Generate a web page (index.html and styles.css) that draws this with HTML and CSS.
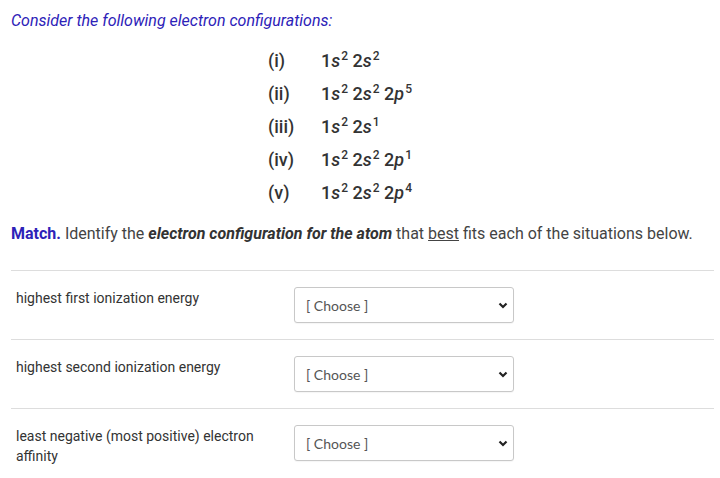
FILE: index.html
```html
<!DOCTYPE html>
<html>
<head>
<meta charset="utf-8">
<link rel="stylesheet" href="styles.css">
</head>
<body>
<div class="page">
  <p class="intro">Consider the following electron configurations:</p>
  <div class="configs">
    <div class="cfg"><span class="num">(i)</span><span class="f">1<i>s</i><sup>2</sup> 2<i>s</i><sup>2</sup></span></div>
    <div class="cfg"><span class="num">(ii)</span><span class="f">1<i>s</i><sup>2</sup> 2<i>s</i><sup>2</sup> 2<i>p</i><sup>5</sup></span></div>
    <div class="cfg"><span class="num">(iii)</span><span class="f">1<i>s</i><sup>2</sup> 2<i>s</i><sup>1</sup></span></div>
    <div class="cfg"><span class="num">(iv)</span><span class="f">1<i>s</i><sup>2</sup> 2<i>s</i><sup>2</sup> 2<i>p</i><sup>1</sup></span></div>
    <div class="cfg"><span class="num">(v)</span><span class="f">1<i>s</i><sup>2</sup> 2<i>s</i><sup>2</sup> 2<i>p</i><sup>4</sup></span></div>
  </div>
  <p class="match"><b class="mt">Match.</b> Identify the <b><i>electron configuration for the atom</i></b> that <u>best</u> fits each of the situations below.</p>
  <div class="rows">
    <div class="row">
      <div class="label">highest first ionization energy</div>
      <div class="sel"><select><option>[ Choose ]</option></select><svg class="chev" width="10" height="7" viewBox="0 0 10 7"><path d="M1.5 1.5 L5 5 L8.5 1.5" fill="none" stroke="#222" stroke-width="2.2"/></svg></div>
    </div>
    <div class="row">
      <div class="label">highest second ionization energy</div>
      <div class="sel"><select><option>[ Choose ]</option></select><svg class="chev" width="10" height="7" viewBox="0 0 10 7"><path d="M1.5 1.5 L5 5 L8.5 1.5" fill="none" stroke="#222" stroke-width="2.2"/></svg></div>
    </div>
    <div class="row">
      <div class="label">least negative (most positive) electron affinity</div>
      <div class="sel"><select><option>[ Choose ]</option></select><svg class="chev" width="10" height="7" viewBox="0 0 10 7"><path d="M1.5 1.5 L5 5 L8.5 1.5" fill="none" stroke="#222" stroke-width="2.2"/></svg></div>
    </div>
  </div>
</div>
</body>
</html>
```
FILE: styles.css
```css
html, body { margin: 0; padding: 0; background: #fff; }
body { font-family: Roboto, "Liberation Sans", sans-serif; color: #333; }
.page { padding: 11px 6px 0 11px; }
.intro { margin: 0; font-size: 16px; line-height: 20px; font-style: italic; color: #2d22b8; }
.configs { margin: 13px 0 0 257px; }
.cfg { display: flex; height: 33px; align-items: center; font-size: 18px; font-weight: 500; color: #333; }
.num { width: 53px; }
.f i { font-style: italic; }
.f sup { font-size: 12px; line-height: 0; vertical-align: 7px; margin-left: 1px; }
.match { margin: 13px 0 0 0; font-size: 16px; line-height: 24px; color: #444; }
.match .mt { color: #2d22b8; }
.match b i { color: #333; }
.rows { margin-top: 24px; }
.row { display: flex; align-items: flex-start; gap: 8px; border-top: 1px solid #ddd; padding: 16px 0 16px 5px; }
.label { width: 270px; font-size: 14px; line-height: 20px; color: #333; padding-top: 1px; }
.sel { position: relative; width: 220px; height: 36px; }
.sel select { -webkit-appearance: none; appearance: none; width: 100%; height: 100%; border: 1px solid #c8c8c8; border-radius: 3px; background: #fff; font-family: Lato, "Liberation Sans", sans-serif; font-size: 14px; color: #555; padding: 0 11px; margin: 0; box-shadow: 0 1px 1px rgba(0,0,0,0.04); }
.chev { position: absolute; right: 6px; top: 15px; }
```
